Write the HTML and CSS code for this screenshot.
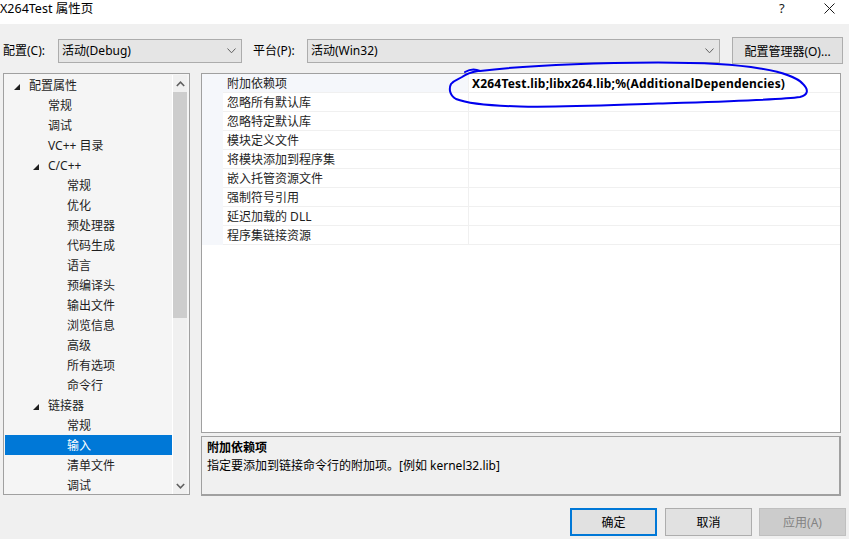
FILE: index.html
```html
<!DOCTYPE html>
<html lang="zh-CN">
<head>
<meta charset="utf-8">
<title>X264Test 属性页</title>
<link rel="stylesheet" href="styles.css">
</head>
<body>
<div class="window">
  <div class="titlebar">
    <span class="title">X264Test 属性页</span>
    <span class="help">?</span>
    <svg class="close" width="11" height="11" viewBox="0 0 11 11"><path d="M0.5 0.5 L10.5 10.5 M10.5 0.5 L0.5 10.5" stroke="#1a1a1a" stroke-width="1" fill="none"/></svg>
  </div>

  <div class="config">
    <span class="lbl lbl-cfg">配置(C):</span>
    <div class="combo combo-cfg"><span>活动(Debug)</span><svg class="chev" width="9" height="6" viewBox="0 0 9 6"><path d="M0.5 0.5 L4.5 4.8 L8.5 0.5" stroke="#606060" stroke-width="1" fill="none"/></svg></div>
    <span class="lbl lbl-plat">平台(P):</span>
    <div class="combo combo-plat"><span>活动(Win32)</span><svg class="chev" width="9" height="6" viewBox="0 0 9 6"><path d="M0.5 0.5 L4.5 4.8 L8.5 0.5" stroke="#606060" stroke-width="1" fill="none"/></svg></div>
    <div class="btn btn-mgr">配置管理器(O)...</div>
  </div>

  <div class="main">
    <div class="tree">
      <div class="tree-list">
        <div class="node l0"><span class="exp"><svg width="6" height="6" viewBox="0 0 6 6"><polygon points="6,0 6,6 0,6" fill="#1e1e1e"/></svg></span>配置属性</div>
        <div class="node l1">常规</div>
        <div class="node l1">调试</div>
        <div class="node l1">VC++ 目录</div>
        <div class="node l1"><span class="exp"><svg width="6" height="6" viewBox="0 0 6 6"><polygon points="6,0 6,6 0,6" fill="#1e1e1e"/></svg></span>C/C++</div>
        <div class="node l2">常规</div>
        <div class="node l2">优化</div>
        <div class="node l2">预处理器</div>
        <div class="node l2">代码生成</div>
        <div class="node l2">语言</div>
        <div class="node l2">预编译头</div>
        <div class="node l2">输出文件</div>
        <div class="node l2">浏览信息</div>
        <div class="node l2">高级</div>
        <div class="node l2">所有选项</div>
        <div class="node l2">命令行</div>
        <div class="node l1"><span class="exp"><svg width="6" height="6" viewBox="0 0 6 6"><polygon points="6,0 6,6 0,6" fill="#1e1e1e"/></svg></span>链接器</div>
        <div class="node l2">常规</div>
        <div class="node l2 selected">输入</div>
        <div class="node l2">清单文件</div>
        <div class="node l2">调试</div>
      </div>
      <div class="vscroll">
        <div class="sb-btn"><svg width="9" height="6" viewBox="0 0 9 6"><path d="M0.8 5 L4.5 1.2 L8.2 5" stroke="#606060" stroke-width="1.6" fill="none"/></svg></div>
        <div class="sb-track"><div class="sb-thumb"></div></div>
        <div class="sb-btn"><svg width="9" height="6" viewBox="0 0 9 6"><path d="M0.8 1 L4.5 4.8 L8.2 1" stroke="#606060" stroke-width="1.6" fill="none"/></svg></div>
      </div>
    </div>

    <div class="right">
      <div class="grid">
        <div class="row first"><div class="gut"></div><div class="name">附加依赖项</div><div class="val bold">X264Test.lib;libx264.lib;%(AdditionalDependencies)</div></div>
        <div class="row"><div class="gut"></div><div class="name">忽略所有默认库</div><div class="val"></div></div>
        <div class="row"><div class="gut"></div><div class="name">忽略特定默认库</div><div class="val"></div></div>
        <div class="row"><div class="gut"></div><div class="name">模块定义文件</div><div class="val"></div></div>
        <div class="row"><div class="gut"></div><div class="name">将模块添加到程序集</div><div class="val"></div></div>
        <div class="row"><div class="gut"></div><div class="name">嵌入托管资源文件</div><div class="val"></div></div>
        <div class="row"><div class="gut"></div><div class="name">强制符号引用</div><div class="val"></div></div>
        <div class="row"><div class="gut"></div><div class="name">延迟加载的 DLL</div><div class="val"></div></div>
        <div class="row"><div class="gut"></div><div class="name">程序集链接资源</div><div class="val"></div></div>
      </div>
      <div class="desc">
        <div class="desc-title">附加依赖项</div>
        <div class="desc-text">指定要添加到链接命令行的附加项。[例如 kernel32.lib]</div>
      </div>
    </div>
  </div>

  <div class="buttons">
    <div class="btn dlg default">确定</div>
    <div class="btn dlg">取消</div>
    <div class="btn dlg disabled">应用(A)</div>
  </div>

  <svg class="annot" width="849" height="539" viewBox="0 0 849 539">
    <path d="M465 72 C470 69 476 69 480 71 C520 66 590 63 658 62.5 C700 62.5 740 65 760 68.5 C782 72 798 78 803 84 C809 90 808 95 800 97 C780 100 720 101.5 658 103.5 C600 105.5 560 107.5 520 106.5 C490 105.8 466 103 456 99 C449 95 449 88 451 84 C454 80 459 79 462 77 C466 74 472 72 478 71" stroke="#0000ee" stroke-width="2" fill="none" stroke-linecap="round"/>
  </svg>
</div>
</body>
</html>
```

FILE: styles.css
```css
* { box-sizing: border-box; }

html, body {
  margin: 0;
  padding: 0;
}

body {
  width: 849px;
  height: 539px;
  overflow: hidden;
  background: #f0f0f0;
  font-family: "Noto Sans", "Noto Sans CJK SC", sans-serif;
  font-size: 12px;
  color: #000;
}

.window {
  position: relative;
  width: 849px;
  height: 539px;
}

/* title bar */
.titlebar {
  height: 24px;
  background: #ffffff;
  display: flex;
  align-items: flex-start;
  position: relative;
}

.title {
  font-size: 12.5px;
  line-height: 18px;
  flex: 1;
}

.help {
  font-size: 13px;
  line-height: 17px;
  width: 12px;
  margin-right: 33px;
  color: #1a1a1a;
}

.close {
  margin-top: 3px;
  margin-right: 14px;
}

/* config row */
.config {
  display: flex;
  align-items: center;
  padding: 13px 0 0 3px;
  height: 40px;
}

.lbl {
  line-height: 24px;
}

.lbl-cfg { width: 55px; }
.lbl-plat { width: 54px; margin-left: 11px; }

.combo {
  height: 24px;
  background: #e5e5e5;
  border: 1px solid #acacac;
  display: flex;
  align-items: center;
  justify-content: space-between;
  padding: 0 4px 0 3px;
}

.combo span { line-height: 22px; }

.combo-cfg { width: 184px; }
.combo-plat { width: 413px; }

.chev { margin-right: 1px; margin-top: 1px; }

.btn {
  background: #e1e1e1;
  border: 1px solid #adadad;
  display: flex;
  align-items: center;
  justify-content: center;
}

.btn-mgr {
  width: 111px;
  height: 27px;
  margin-left: 12px;
}

/* main */
.main {
  display: flex;
  align-items: flex-start;
  padding-left: 3px;
  margin-top: 9px;
}

.tree {
  width: 187px;
  height: 422px;
  border: 1px solid #a0a0a0;
  background: #f5f5f5;
  display: flex;
  padding: 1px 2px 0 1px;
  overflow: hidden;
}

.tree-list {
  flex: 1;
  overflow: hidden;
}

.node {
  height: 20px;
  line-height: 20px;
  padding-top: 1px;
  white-space: nowrap;
  color: #1e1e1e;
  display: flex;
  align-items: center;
}

.node.l0 { padding-left: 24px; }
.node.l1 { padding-left: 43px; }
.node.l2 { padding-left: 62px; }

.node.selected {
  background: #0078d7;
  color: #ffffff;
}

.exp {
  width: 15px;
  margin-left: -15px;
  display: flex;
  align-items: center;
  padding-top: 2px;
}

.vscroll {
  width: 15px;
  background: #f0f0f0;
  display: flex;
  flex-direction: column;
  border-left: 1px solid #ffffff;
}

.sb-btn {
  height: 17px;
  display: flex;
  align-items: center;
  justify-content: center;
}

.sb-track {
  flex: 1;
}

.sb-thumb {
  height: 226px;
  background: #cdcdcd;
}

.right {
  width: 640px;
  margin-left: 11px;
  display: flex;
  flex-direction: column;
  gap: 3px;
}

.grid {
  height: 360px;
  background: #ffffff;
  border: 1px solid #a0a0a0;
}

.row {
  display: flex;
  height: 19px;
}

.gut {
  width: 21px;
  background: #f5f7fb;
}

.name {
  width: 246px;
  padding: 2px 0 0 4px;
  line-height: 16px;
  border-bottom: 1px solid #f0f0f0;
  border-right: 1px solid #f0f0f0;
  color: #1e1e1e;
  white-space: nowrap;
}

.row.first .name { background: #f5f7fb; }

.val {
  flex: 1;
  padding: 2px 0 0 3px;
  line-height: 16px;
  border-bottom: 1px solid #f0f0f0;
  white-space: nowrap;
}

.val.bold {
  font-weight: bold;
  letter-spacing: 0.2px;
}

.desc {
  height: 60px;
  background: #f0f0f0;
  border: 1px solid #a0a0a0;
  border-right-width: 2px;
  border-bottom-width: 2px;
  padding: 2px 0 0 5px;
}

.desc-title {
  font-weight: bold;
  line-height: 18px;
}

.desc-text {
  line-height: 18px;
}

/* bottom buttons */
.buttons {
  display: flex;
  justify-content: flex-end;
  padding: 12px 3px 0 0;
  gap: 7px;
}

.btn.dlg {
  width: 87px;
  height: 28px;
}

.btn.default {
  border: 2px solid #0078d7;
  margin-right: 1px;
}

.btn.disabled {
  background: #cccccc;
  border-color: #bfbfbf;
  color: #838383;
}

.annot {
  position: absolute;
  left: 0;
  top: 0;
  pointer-events: none;
}
```
